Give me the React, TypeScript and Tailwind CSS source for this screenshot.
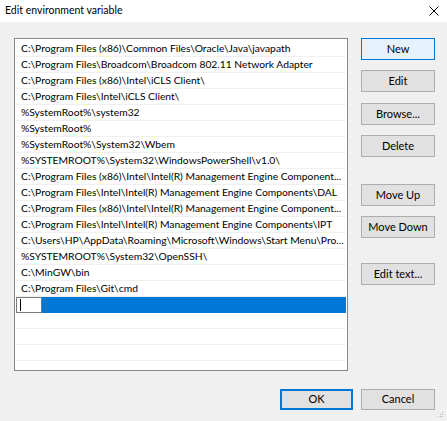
const paths = [
  "C:\\Program Files (x86)\\Common Files\\Oracle\\Java\\javapath",
  "C:\\Program Files\\Broadcom\\Broadcom 802.11 Network Adapter",
  "C:\\Program Files (x86)\\Intel\\iCLS Client\\",
  "C:\\Program Files\\Intel\\iCLS Client\\",
  "%SystemRoot%\\system32",
  "%SystemRoot%",
  "%SystemRoot%\\System32\\Wbem",
  "%SYSTEMROOT%\\System32\\WindowsPowerShell\\v1.0\\",
  "C:\\Program Files (x86)\\Intel\\Intel(R) Management Engine Component...",
  "C:\\Program Files\\Intel\\Intel(R) Management Engine Components\\DAL",
  "C:\\Program Files (x86)\\Intel\\Intel(R) Management Engine Component...",
  "C:\\Program Files\\Intel\\Intel(R) Management Engine Components\\IPT",
  "C:\\Users\\HP\\AppData\\Roaming\\Microsoft\\Windows\\Start Menu\\Pro...",
  "%SYSTEMROOT%\\System32\\OpenSSH\\",
  "C:\\MinGW\\bin",
  "C:\\Program Files\\Git\\cmd",
];

function Btn({ label, mt, primary }: { label: string; mt: string; primary?: boolean }) {
  return (
    <button
      className={
        primary
          ? `${mt} h-[22px] w-[74px] border border-[#0078d7] bg-[#e5f1fb] text-[11px] text-black`
          : `${mt} h-[22px] w-[74px] border border-[#adadad] bg-[#e1e1e1] text-[11px] text-black`
      }
    >
      {label}
    </button>
  );
}

export default function App() {
  return (
    <div
      className="relative flex h-[421px] w-[447px] flex-col bg-[#f0f0f0] text-black"
      style={{ fontFamily: 'Lato, "Noto Sans", sans-serif' }}
    >
      <div className="flex h-[22px] items-center justify-between bg-white pl-[5px] pr-[8px]">
        <span className="text-[10.5px]">Edit environment variable</span>
        <svg width="10" height="10" viewBox="0 0 10 10">
          <path d="M0.5 0.5L9.5 9.5M9.5 0.5L0.5 9.5" stroke="#000" strokeWidth="1" />
        </svg>
      </div>

      <div className="flex pl-[14px] pt-[16px]">
        <div className="h-[333px] w-[334px] overflow-hidden border border-[#828790] bg-white pt-[2px]">
          {paths.map((p, i) => (
            <div
              key={i}
              className="mx-[1px] flex h-[16px] items-center border-b border-[#f0f0f0] pl-[5px] text-[10.3px] leading-none whitespace-nowrap"
            >
              {p}
            </div>
          ))}
          <div className="mx-[1px] flex h-[16px] items-center bg-[#0078d7]">
            <div className="flex h-[16px] w-[26px] items-center border border-[#7a7a7a] bg-white pl-[3px]">
              <div className="h-[12px] w-px bg-black" />
            </div>
          </div>
          {[0, 1, 2, 3].map((i) => (
            <div key={i} className="mx-[1px] h-[16px] border-b border-[#f0f0f0]" />
          ))}
        </div>

        <div className="ml-[13px] flex flex-col">
          <Btn label="New" mt="mt-0" primary />
          <Btn label="Edit" mt="mt-[10px]" />
          <Btn label="Browse..." mt="mt-[11px]" />
          <Btn label="Delete" mt="mt-[10px]" />
          <Btn label="Move Up" mt="mt-[27px]" />
          <Btn label="Move Down" mt="mt-[10px]" />
          <Btn label="Edit text..." mt="mt-[25px]" />
        </div>
      </div>

      <div className="mt-[18px] flex justify-end gap-[8px] pr-[12px]">
        <button className="h-[21px] w-[73px] border-2 border-[#0078d7] bg-[#e1e1e1] text-[11px]">OK</button>
        <button className="h-[21px] w-[74px] border border-[#adadad] bg-[#e1e1e1] text-[11px]">Cancel</button>
      </div>

      <svg className="absolute bottom-[3px] right-[3px]" width="6" height="6" viewBox="0 0 6 6">
        <rect x="4" y="0" width="1" height="1" fill="#b5b5b5" />
        <rect x="2" y="2" width="1" height="1" fill="#b5b5b5" />
        <rect x="4" y="2" width="1" height="1" fill="#b5b5b5" />
        <rect x="0" y="4" width="1" height="1" fill="#b5b5b5" />
        <rect x="2" y="4" width="1" height="1" fill="#b5b5b5" />
        <rect x="4" y="4" width="1" height="1" fill="#b5b5b5" />
      </svg>
    </div>
  );
}
